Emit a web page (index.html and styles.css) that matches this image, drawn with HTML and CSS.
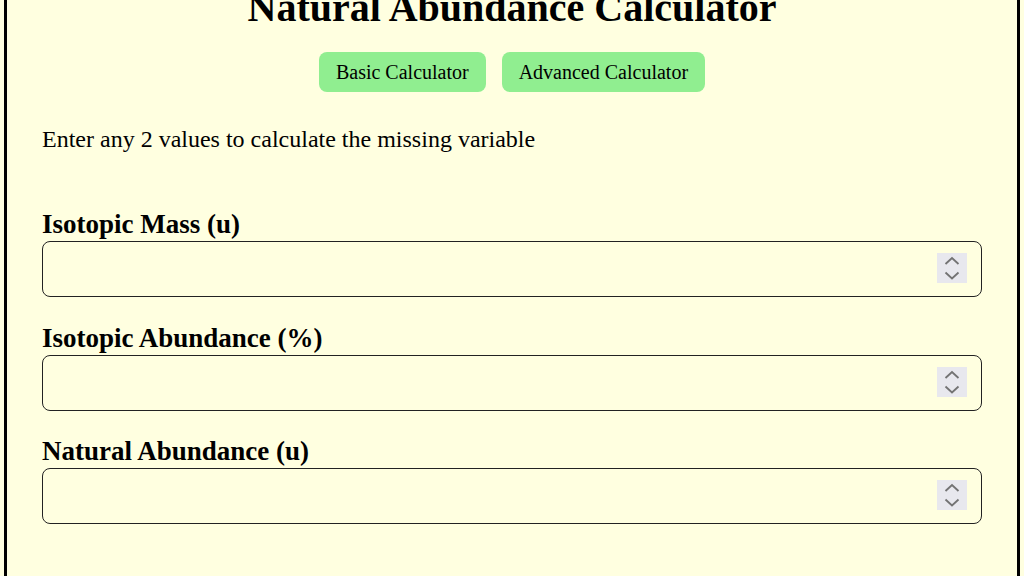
FILE: index.html
```html
<!DOCTYPE html>
<html>
<head>
  <meta charset="UTF-8">
  <title>Natural Abundance Calculator</title>
  <link rel="stylesheet" href="styles.css">
</head>
<body>
  <div class="calculator">
    <h1 class="title">Natural Abundance Calculator</h1>

    <div class="tabs">
      <button class="tab">Basic Calculator</button>
      <button class="tab">Advanced Calculator</button>
    </div>

    <p class="hint">Enter any 2 values to calculate the missing variable</p>

    <div class="fields">
      <div class="field">
        <label for="mass">Isotopic Mass (u)</label>
        <div class="input-wrap">
          <input type="number" id="mass">
          <span class="spinner">
            <svg width="30" height="30" viewBox="0 0 30 30"><path d="M8.5 11 L15 5 L21.5 11 M8.5 19.5 L15 25.5 L21.5 19.5" fill="none" stroke="#737373" stroke-width="1.8"/></svg>
          </span>
        </div>
      </div>
      <div class="field">
        <label for="abundance">Isotopic Abundance (%)</label>
        <div class="input-wrap">
          <input type="number" id="abundance">
          <span class="spinner">
            <svg width="30" height="30" viewBox="0 0 30 30"><path d="M8.5 11 L15 5 L21.5 11 M8.5 19.5 L15 25.5 L21.5 19.5" fill="none" stroke="#737373" stroke-width="1.8"/></svg>
          </span>
        </div>
      </div>
      <div class="field">
        <label for="natural">Natural Abundance (u)</label>
        <div class="input-wrap">
          <input type="number" id="natural">
          <span class="spinner">
            <svg width="30" height="30" viewBox="0 0 30 30"><path d="M8.5 11 L15 5 L21.5 11 M8.5 19.5 L15 25.5 L21.5 19.5" fill="none" stroke="#737373" stroke-width="1.8"/></svg>
          </span>
        </div>
      </div>
    </div>
  </div>
</body>
</html>
```

FILE: styles.css
```css
html, body {
  margin: 0;
  background: #ffffe0;
}
body {
  font-family: "Liberation Serif", "Times New Roman", serif;
  color: #000;
}
.calculator {
  margin: -18px 4px 0;
  border: 3px solid #000;
  padding: 0 35px 40px;
  min-height: 700px;
}
.title {
  margin: 0;
  font-size: 40px;
  line-height: 46px;
  text-align: center;
}
.tabs {
  display: flex;
  justify-content: center;
  gap: 16px;
  margin-top: 21px;
}
.tab {
  font-family: inherit;
  font-size: 20px;
  line-height: 24px;
  padding: 8px 17px;
  border: none;
  border-radius: 8px;
  background: #90ee90;
  color: #000;
  cursor: pointer;
}
.hint {
  font-size: 24px;
  margin: 34px 0 0;
}
.fields {
  display: flex;
  flex-direction: column;
  gap: 24.5px;
  margin-top: 55px;
}
.field label {
  display: block;
  font-size: 27px;
  font-weight: bold;
  line-height: 32px;
  margin-bottom: 1px;
}
.input-wrap {
  position: relative;
}
.input-wrap input {
  display: block;
  width: 100%;
  height: 56px;
  box-sizing: border-box;
  padding: 12px 50px 12px 14px;
  font-family: inherit;
  font-size: 20px;
  border: 1px solid #222;
  border-radius: 8px;
  background: transparent;
}
.input-wrap input::-webkit-inner-spin-button,
.input-wrap input::-webkit-outer-spin-button {
  -webkit-appearance: none;
  margin: 0;
}
.spinner {
  position: absolute;
  top: 12px;
  right: 15px;
  width: 30px;
  height: 30px;
  background: #e8e8ee;
}
.spinner svg {
  display: block;
}
```
